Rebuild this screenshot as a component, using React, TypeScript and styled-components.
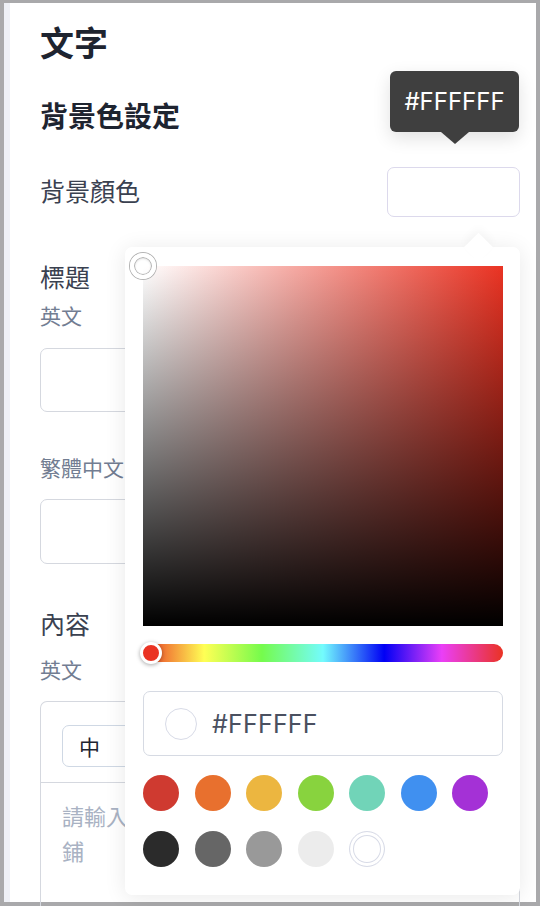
import React from "react";
import styled, { createGlobalStyle } from "styled-components";

const GlobalStyle = createGlobalStyle`
  html, body { margin: 0; padding: 0; background: #a9a9ab; overflow: hidden; }
  body { font-family: Inter, "Noto Sans CJK TC", "Noto Sans", sans-serif; }
  * { box-sizing: border-box; }
`;

const Frame = styled.div`
  height: 906px;
  padding: 3px 4px 4px 4px;
`;

const Panel = styled.div`
  height: 899px;
  background: #ffffff;
  border-left: 6px solid #eef0f6;
  padding: 0 16px 0 30px;
  display: flex;
  flex-direction: column;
`;

const PageTitle = styled.h1`
  margin: 21px 0 0;
  font-size: 34px;
  line-height: 40px;
  font-weight: 700;
  color: #1e2430;
`;

const SectionTitle = styled.h2`
  margin: 35px 0 0;
  font-size: 28px;
  line-height: 36px;
  font-weight: 700;
  color: #1e2430;
`;

const ColorRow = styled.div`
  margin-top: 32px;
  display: flex;
  align-items: center;
  justify-content: space-between;
`;

const RowLabel = styled.span`
  font-size: 25px;
  line-height: 32px;
  color: #3a4150;
`;

const SwatchWrap = styled.div`
  position: relative;
  width: 133px;
  height: 50px;
`;

const SwatchButton = styled.div`
  width: 100%;
  height: 100%;
  border: 1px solid #dcd9ec;
  border-radius: 7px;
  background: #ffffff;
`;

const Tooltip = styled.div`
  position: absolute;
  left: 3px;
  bottom: calc(100% + 35px);
  width: 129px;
  height: 61px;
  border-radius: 6px;
  background: #3f3f3f;
  color: #ffffff;
  font-size: 24px;
  display: flex;
  align-items: center;
  justify-content: center;
  box-shadow: 0 6px 18px rgba(0, 0, 0, 0.12);
  z-index: 3;

  &::after {
    content: "";
    position: absolute;
    left: 50%;
    top: 100%;
    transform: translateX(-50%);
    border-left: 14px solid transparent;
    border-right: 14px solid transparent;
    border-top: 12px solid #3f3f3f;
  }
`;

const Popover = styled.div`
  position: absolute;
  right: 0;
  top: calc(100% + 30px);
  width: 395px;
  height: 648px;
  background: #ffffff;
  border-radius: 7px;
  box-shadow: 0 2px 22px rgba(0, 0, 0, 0.09);
  padding: 19px 17px 28px 18px;
  display: flex;
  flex-direction: column;
  z-index: 2;

  &::before {
    content: "";
    position: absolute;
    top: -10px;
    left: 343px;
    width: 21px;
    height: 21px;
    background: #ffffff;
    transform: rotate(45deg);
    box-shadow: -4px -4px 8px rgba(0, 0, 0, 0.03);
  }
`;

const Saturation = styled.div`
  position: relative;
  width: 360px;
  height: 360px;
  background: linear-gradient(to top, #000000, rgba(0, 0, 0, 0)),
    linear-gradient(to right, #ffffff, #ea3323);
`;

const SatCursor = styled.div`
  position: absolute;
  left: -13px;
  top: -13px;
  width: 26px;
  height: 26px;
  border-radius: 50%;
  border: 4px solid #ffffff;
  background: rgba(255, 255, 255, 0.6);
  box-shadow: 0 0 0 1px #b3b3b3, inset 0 0 0 1px #b3b3b3, inset 0 1px 3px rgba(0, 0, 0, 0.2);
`;

const HueBar = styled.div`
  position: relative;
  margin-top: 18px;
  height: 18px;
  border-radius: 9px;
  background: linear-gradient(
    to right,
    #ea3323 0%,
    #ffff55 17%,
    #75fb4c 33%,
    #73fbfd 50%,
    #0000f5 67%,
    #ea3ff7 83%,
    #ea3323 100%
  );
`;

const HueThumb = styled.div`
  position: absolute;
  left: -3px;
  top: -2px;
  width: 22px;
  height: 22px;
  border-radius: 50%;
  background: #ea3323;
  border: 3px solid #ffffff;
  box-shadow: 0 1px 4px rgba(0, 0, 0, 0.35);
`;

const HexField = styled.div`
  margin-top: 29px;
  height: 65px;
  border: 1px solid #d6dae3;
  border-radius: 7px;
  display: flex;
  align-items: center;
  padding-left: 21px;
  gap: 15px;
`;

const HexDot = styled.span`
  width: 32px;
  height: 32px;
  border-radius: 50%;
  border: 1px solid #d8dbe7;
  background: #ffffff;
`;

const HexText = styled.span`
  font-size: 25px;
  color: #4a5060;
  letter-spacing: 0.2px;
`;

const SwatchGrid = styled.div`
  margin-top: 19px;
  display: grid;
  grid-template-columns: repeat(7, 36px);
  grid-auto-rows: 36px;
  column-gap: 15.5px;
  row-gap: 20px;
`;

const Dot = styled.span<{ $color: string; $outlined?: boolean }>`
  width: 36px;
  height: 36px;
  border-radius: 50%;
  background: ${(p) => p.$color};
  ${(p) =>
    p.$outlined
      ? "border: 1px solid #d8dbe7; box-shadow: inset 0 0 0 3px #ffffff, inset 0 0 0 4px #d8dbe7;"
      : ""}
`;

const FieldGroup = styled.div<{ $mt: number }>`
  margin-top: ${(p) => p.$mt}px;
  display: flex;
  flex-direction: column;
`;

const GroupTitle = styled.div`
  font-size: 25px;
  line-height: 32px;
  color: #3a4150;
`;

const SubLabel = styled.div<{ $mt: number }>`
  margin-top: ${(p) => p.$mt}px;
  font-size: 21px;
  line-height: 28px;
  color: #727d92;
`;

const TextInput = styled.div<{ $mt: number; $h: number }>`
  margin-top: ${(p) => p.$mt}px;
  height: ${(p) => p.$h}px;
  border: 1px solid #d5d8df;
  border-radius: 7px;
  background: #ffffff;
`;

const Editor = styled.div`
  margin-top: 16px;
  height: 205px;
  border: 1px solid #d5d8df;
  border-bottom: none;
  border-radius: 7px 7px 0 0;
  display: flex;
  flex-direction: column;
`;

const Toolbar = styled.div`
  padding: 23px 21px 15px;
  border-bottom: 1px solid #d5d8df;
  display: flex;
`;

const ToolButton = styled.div`
  height: 42px;
  width: 110px;
  border: 1px solid #cfd8e4;
  border-radius: 7px;
  padding-left: 16px;
  display: flex;
  align-items: center;
  font-size: 21px;
  color: #1e2430;
`;

const Placeholder = styled.div`
  padding: 17px 21px;
  font-size: 22px;
  line-height: 35px;
  color: #a9b2c3;
`;

const presets = [
  "#cf3a30",
  "#e8702e",
  "#ecb640",
  "#88d33e",
  "#71d4b8",
  "#4090f0",
  "#a431d6",
  "#2b2b2b",
  "#666666",
  "#999999",
  "#ececec",
];

export default function App() {
  return (
    <>
      <GlobalStyle />
      <Frame>
        <Panel>
          <PageTitle>文字</PageTitle>
          <SectionTitle>背景色設定</SectionTitle>
          <ColorRow>
            <RowLabel>背景顏色</RowLabel>
            <SwatchWrap>
              <SwatchButton />
              <Tooltip>#FFFFFF</Tooltip>
              <Popover>
                <Saturation>
                  <SatCursor />
                </Saturation>
                <HueBar>
                  <HueThumb />
                </HueBar>
                <HexField>
                  <HexDot />
                  <HexText>#FFFFFF</HexText>
                </HexField>
                <SwatchGrid>
                  {presets.map((c) => (
                    <Dot key={c} $color={c} />
                  ))}
                  <Dot $color="#ffffff" $outlined />
                </SwatchGrid>
              </Popover>
            </SwatchWrap>
          </ColorRow>
          <FieldGroup $mt={45}>
            <GroupTitle>標題</GroupTitle>
            <SubLabel $mt={9}>英文</SubLabel>
            <TextInput $mt={17} $h={64} />
            <SubLabel $mt={43}>繁體中文</SubLabel>
            <TextInput $mt={16} $h={65} />
          </FieldGroup>
          <FieldGroup $mt={45}>
            <GroupTitle>內容</GroupTitle>
            <SubLabel $mt={16}>英文</SubLabel>
            <Editor>
              <Toolbar>
                <ToolButton>中</ToolButton>
              </Toolbar>
              <Placeholder>
                請輸入內容，例如品牌故事與介紹您的店
                <br />
                鋪
              </Placeholder>
            </Editor>
          </FieldGroup>
        </Panel>
      </Frame>
    </>
  );
}
